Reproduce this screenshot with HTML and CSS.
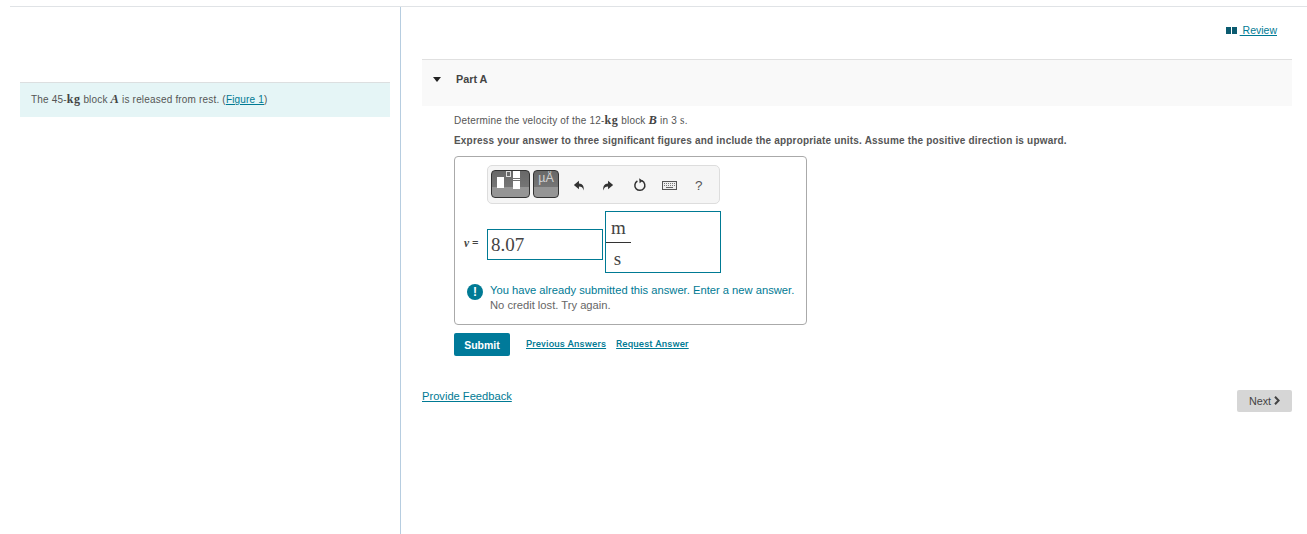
FILE: index.html
```html
<!DOCTYPE html>
<html lang="en">
<head>
<meta charset="utf-8">
<title>Part A</title>
<link rel="stylesheet" href="styles.css">
</head>
<body>
<div class="page">
  <div class="columns">
    <aside class="left">
      <div class="intro">The 45-<span class="mb">kg</span> block <span class="mi">A</span> is released from rest. (<a href="#">Figure 1</a>)</div>
    </aside>
    <main class="right">
      <div class="review-row">
        <a class="review" href="#"><svg class="book" viewBox="0 0 11 7" width="11" height="7"><rect x="0" y="0" width="5" height="7"/><rect x="6" y="0" width="5" height="7"/></svg>&nbsp;Review</a>
      </div>
      <section class="part">
        <header class="part-head">
          <svg class="caret" viewBox="0 0 8 5" width="8" height="5"><path d="M0 0H8L4 5Z"/></svg>
          <span class="part-title">Part A</span>
        </header>
        <div class="part-body">
          <p class="q">Determine the velocity of the 12-<span class="mb">kg</span> block <span class="mi">B</span> in 3 <span class="mr">s</span>.</p>
          <p class="instr">Express your answer to three significant figures and include the appropriate units. Assume the positive direction is upward.</p>
          <div class="answer">
            <div class="toolbar">
              <div class="tbtn wide">
                <svg viewBox="0 0 39 28" width="39" height="28">
                  <rect x="6" y="7" width="7" height="11" fill="#fff"/>
                  <rect x="15.500" y="1.500" width="4" height="5" fill="none" stroke="#ddd" stroke-width="1"/>
                  <rect x="22" y="1" width="7" height="7" fill="#fff"/>
                  <rect x="22" y="9" width="7" height="1" fill="#fff"/>
                  <rect x="22" y="11" width="7" height="8" fill="#fff"/>
                </svg>
              </div>
              <div class="tbtn narrow"><span class="mu">µÅ</span></div>
              <div class="tools">
                <svg class="tool" viewBox="0 0 12 12" width="13" height="13"><path d="M5.500 1.500 0.800 5.500l4.700 4V7c2.300 0 3.600.8 4.300 3.500.6-3.800-.9-6.200-4.300-6.400Z" fill="#333"/></svg>
                <svg class="tool" viewBox="0 0 12 12" width="13" height="13"><path d="M6.500 1.500l4.700 4-4.700 4V7c-2.300 0-3.600.8-4.300 3.500C1.600 6.700 3.100 4.300 6.500 4.100Z" fill="#333"/></svg>
                <svg class="tool" viewBox="0 0 14 14" width="14" height="14"><path d="M8.900 2.800A5 5 0 1 1 4.400 3" fill="none" stroke="#333" stroke-width="1.500"/><path d="M6.200 0.300 9.800 2.700 6.600 5.200Z" fill="#333"/></svg>
                <svg class="tool" viewBox="0 0 15 9" width="15" height="9"><rect x="0.500" y="0.500" width="14" height="8" fill="#eee" stroke="#555"/><path d="M2 2.500h11M2 4.500h11" stroke="#777" stroke-dasharray="1 1"/><path d="M4 6.500h7" stroke="#666"/></svg>
                <span class="help">?</span>
              </div>
            </div>
            <div class="input-row">
              <span class="var"><i>v</i> =</span>
              <div class="num">8.07</div>
              <div class="units">
                <div class="frac"><span class="top">m</span><span class="bot">s</span></div>
              </div>
            </div>
            <div class="feedback">
              <span class="alert">!</span>
              <div class="msg">
                <div class="msg-a">You have already submitted this answer. Enter a new answer.</div>
                <div class="msg-b">No credit lost. Try again.</div>
              </div>
            </div>
          </div>
          <div class="actions">
            <button class="submit" type="button">Submit</button>
            <a class="small-link first" href="#">Previous Answers</a>
            <a class="small-link" href="#">Request Answer</a>
          </div>
        </div>
      </section>
      <div class="foot">
        <a class="feedback-link" href="#">Provide Feedback</a>
        <button class="next" type="button">Next <svg viewBox="0 0 6 9" width="6" height="9"><path d="M1 .8 4.600 4.500 1 8.200" fill="none" stroke="#444" stroke-width="2"/></svg></button>
      </div>
    </main>
  </div>
</div>
</body>
</html>
```
FILE: styles.css
```css
* { box-sizing: border-box; }
html, body { margin: 0; padding: 0; background: #fff; }
body { font-family: "Liberation Sans", Arial, sans-serif; color: #444; height: 534px; overflow: hidden; }
a { color: #007a94; }
.page { padding: 6px 0 0 10px; height: 534px; }
.columns { display: flex; height: 528px; border-top: 1px solid #e0e3e6; }
.left { width: 391px; flex: none; padding: 75px 10px 0 10px; border-right: 1px solid #b6cde0; }
.intro { height: 35px; background: #e5f5f6; border-top: 1px solid #dcdfe0; padding: 9px 0 0 11px; font-size: 10px; letter-spacing: .18px; line-height: 14px; color: #555; }
.mb { font-family: "Liberation Serif", serif; font-weight: bold; font-size: 12px; letter-spacing: .5px; color: #444; }
.mi { font-family: "Liberation Serif", serif; font-style: italic; font-weight: bold; font-size: 12.500px; color: #444; }
.mr { font-family: "Liberation Serif", serif; font-size: 11.500px; }
.right { flex: 1; min-width: 0; padding: 0 15px 0 21px; }
.review-row { display: flex; justify-content: flex-end; height: 52px; padding: 17px 15px 0 0; }
.review { font-size: 10.500px; line-height: 13px; display: block; height: 13px; }
.book { fill: #0b5b70; vertical-align: 0; margin-right: 3px; }
.part-head { height: 47px; background: #f9f9f9; border-top: 1px solid #e0e0e0; display: flex; align-items: flex-start; padding: 13px 0 0 11px; }
.caret { fill: #222; margin-top: 4px; }
.part-title { margin-left: 15px; font-size: 10.800px; line-height: 13px; font-weight: bold; color: #444; }
.part-body { padding: 0 0 0 32px; }
.q { margin: 6px 0 0; font-size: 10px; letter-spacing: .2px; line-height: 16px; color: #555; }
.instr { margin: 6px 0 0; font-size: 10px; letter-spacing: .19px; line-height: 12px; font-weight: bold; color: #555; }
.answer { margin-top: 9px; width: 353px; height: 169px; border: 1px solid #aaa; border-radius: 4px; padding: 8px 0 0 32px; }
.toolbar { width: 233px; height: 39px; background: #f5f5f5; border: 1px solid #ddd; border-radius: 5px; display: flex; align-items: flex-start; padding: 4px 0 0 3px; gap: 3px; }
.tbtn { height: 28px; border: 1px solid #333; border-radius: 4px; background: linear-gradient(#686868 0, #757575 61%, #959595 61%, #959595 100%); overflow: hidden; }
.tbtn.wide { width: 39px; }
.tbtn svg { display: block; margin: -1px 0 0 -1px; }
.tbtn.narrow { width: 26px; text-align: center; }
.mu { font-family: "Liberation Sans", Arial, sans-serif; font-size: 12.500px; line-height: 15px; color: #d0d0d0; display: block; }
.tools { display: flex; align-items: center; height: 30px; margin-left: 11px; }
.tool { flex: none; }
.tool:nth-child(1) { margin-right: 15px; }
.tool:nth-child(2) { margin-right: 19px; }
.tool:nth-child(3) { margin-right: 15px; }
.help { margin-left: 18px; font-size: 13.500px; color: #555; }
.input-row { display: flex; align-items: flex-start; margin-top: 7px; }
.var { margin: 26px 0 0 -23px; width: 23px; font-family: "Liberation Serif", serif; font-size: 11.500px; font-weight: bold; color: #444; line-height: 12px; }
.num { margin-top: 18px; width: 116px; height: 31px; border: 1px solid #007a94; font-family: "Liberation Serif", serif; font-size: 19px; line-height: 29px; padding-left: 3px; color: #444; }
.units { margin-left: 2px; width: 116px; height: 62px; border: 1px solid #007a94; }
.frac { width: 25px; display: flex; flex-direction: column; align-items: center; font-family: "Liberation Serif", serif; font-size: 19px; color: #444; }
.top { width: 100%; height: 31px; line-height: 31px; text-align: center; border-bottom: 1px solid #333; }
.bot { line-height: 31px; height: 29px; margin-right: 2px; }
.feedback { display: flex; margin: 10px 0 0 -20px; font-size: 11.200px; line-height: 15px; }
.alert { flex: none; width: 16px; height: 16px; margin-top: 1px; border-radius: 50%; background: #007a94; color: #fff; font-weight: bold; font-size: 12px; line-height: 16px; text-align: center; }
.msg { margin-left: 7px; }
.msg-a { color: #007a94; white-space: nowrap; }
.msg-b { color: #666; }
.actions { display: flex; align-items: center; margin-top: 8px; height: 23px; }
.submit { width: 56px; height: 23px; border: 0; border-radius: 2px; background: #007a9a; color: #fff; font: bold 10.500px "Liberation Sans", Arial, sans-serif; padding: 0; }
.small-link { font-family: "Roboto", "Liberation Sans", sans-serif; font-weight: 500; font-size: 9.700px; letter-spacing: .15px; line-height: 12px; margin: -2px 0 0 10px; white-space: nowrap; }
.small-link.first { margin-left: 16px; }
.foot { display: flex; justify-content: space-between; align-items: flex-start; margin-top: 34px; }
.feedback-link { font-size: 11.150px; line-height: 13px; }
.next { width: 55px; height: 22px; border: 0; border-radius: 2px; background: #d6d6d6; color: #444; font: 10.800px "Liberation Sans", Arial, sans-serif; padding: 0; }
```
